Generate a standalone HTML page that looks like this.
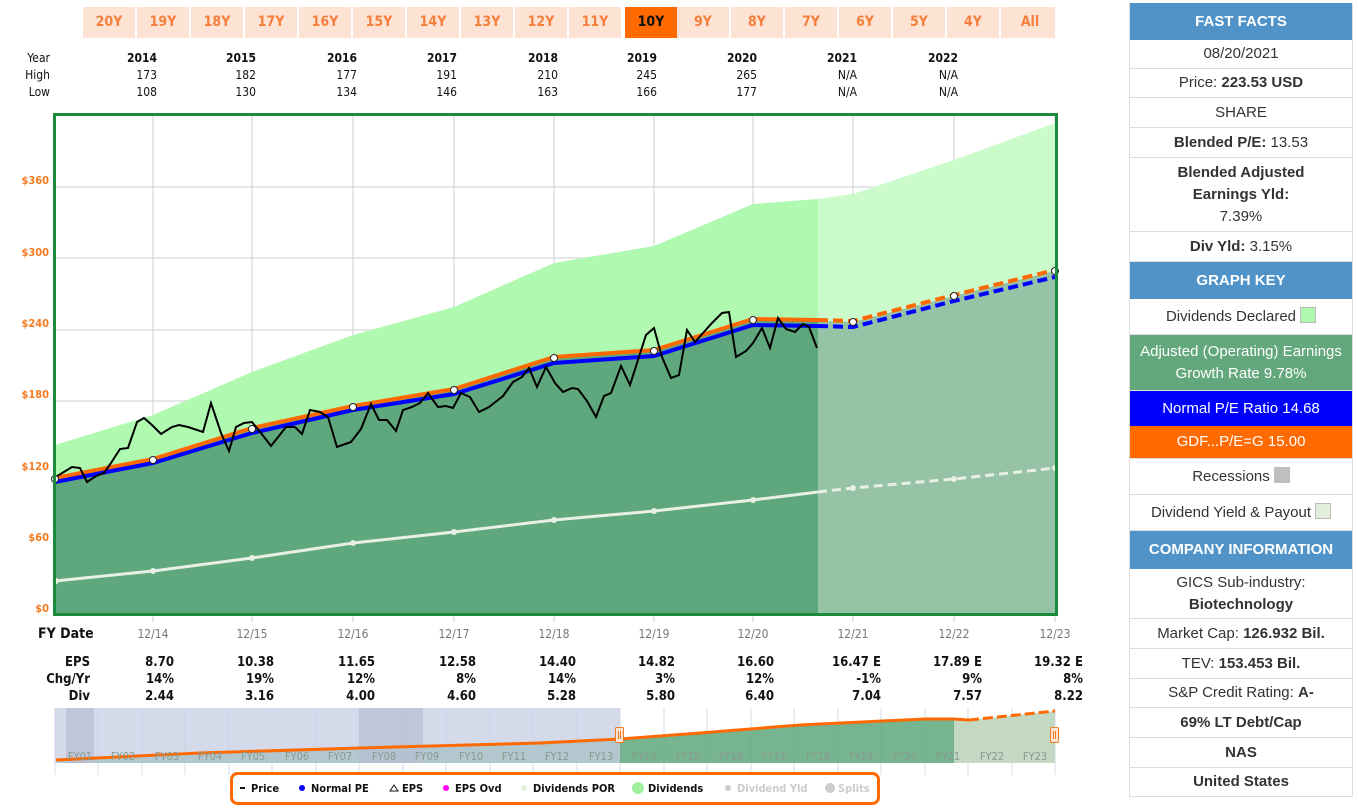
<!DOCTYPE html>
<html><head><meta charset="utf-8"><style>
*{margin:0;padding:0;box-sizing:border-box}
body{width:1358px;height:809px;background:#fff;font-family:"Liberation Sans",sans-serif;position:relative;overflow:hidden}
.tab{position:absolute;top:7px;height:31px;width:52px;background:#fde3d4;color:#f47f3c;font-size:14px;font-weight:bold;text-align:center;line-height:31px;font-family:"DejaVu Sans Condensed","Liberation Sans Narrow","Liberation Sans",sans-serif}
.tab.on{background:#ff6a00;color:#111}
.t{position:absolute;font-size:12px;color:#111;font-family:"DejaVu Sans Condensed","Liberation Sans",sans-serif}
.r{text-align:right}
.b{font-weight:bold}
#rp{position:absolute;left:1129px;top:3px;width:224px;border-left:1px solid #ddd;border-right:1px solid #ddd}
#rp div{border-bottom:1px solid #ddd;text-align:center;font-size:15px;color:#333;display:flex;align-items:center;justify-content:center;flex-direction:column;line-height:22px}
#rp .h{background:#4f93c9;color:#fff;font-weight:bold;font-size:15px;border-bottom:none}
.sw{display:inline-block;width:16px;height:16px;vertical-align:-2px;margin-left:4px;border:1px solid #bbb}
</style></head><body>

<div class="tab" style="left:83px">20Y</div><div class="tab" style="left:137px">19Y</div><div class="tab" style="left:191px">18Y</div><div class="tab" style="left:245px">17Y</div><div class="tab" style="left:299px">16Y</div><div class="tab" style="left:353px">15Y</div><div class="tab" style="left:407px">14Y</div><div class="tab" style="left:461px">13Y</div><div class="tab" style="left:515px">12Y</div><div class="tab" style="left:569px">11Y</div><div class="tab on" style="left:625px">10Y</div><div class="tab" style="left:677px">9Y</div><div class="tab" style="left:731px">8Y</div><div class="tab" style="left:785px">7Y</div><div class="tab" style="left:839px">6Y</div><div class="tab" style="left:893px">5Y</div><div class="tab" style="left:947px">4Y</div><div class="tab" style="left:1001px">3Y</div><div class="tab" style="left:1005px;width:50px">All</div>

<div class="t r" style="left:0;width:50px;top:50px;line-height:17px">Year<br>High<br>Low</div>
<div class="t r" style="left:97px;width:60px;top:50px;line-height:17px"><b>2014</b><br>173<br>108</div>
<div class="t r" style="left:196px;width:60px;top:50px;line-height:17px"><b>2015</b><br>182<br>130</div>
<div class="t r" style="left:297px;width:60px;top:50px;line-height:17px"><b>2016</b><br>177<br>134</div>
<div class="t r" style="left:397px;width:60px;top:50px;line-height:17px"><b>2017</b><br>191<br>146</div>
<div class="t r" style="left:498px;width:60px;top:50px;line-height:17px"><b>2018</b><br>210<br>163</div>
<div class="t r" style="left:597px;width:60px;top:50px;line-height:17px"><b>2019</b><br>245<br>166</div>
<div class="t r" style="left:697px;width:60px;top:50px;line-height:17px"><b>2020</b><br>265<br>177</div>
<div class="t r" style="left:797px;width:60px;top:50px;line-height:17px"><b>2021</b><br>N/A<br>N/A</div>
<div class="t r" style="left:898px;width:60px;top:50px;line-height:17px"><b>2022</b><br>N/A<br>N/A</div>

<svg width="1120" height="809" style="position:absolute;left:0;top:0" font-family="DejaVu Sans Condensed,Liberation Sans,sans-serif">
<g stroke="#e6e6e6" stroke-width="2"><line x1="55" x2="1057" y1="187" y2="187"/><line x1="55" x2="1057" y1="258" y2="258"/><line x1="55" x2="1057" y1="330" y2="330"/><line x1="55" x2="1057" y1="401" y2="401"/><line x1="55" x2="1057" y1="472" y2="472"/><line x1="55" x2="1057" y1="543" y2="543"/></g>
<g stroke="#cfcfcf" stroke-width="1"><line x1="153" x2="153" y1="116" y2="622"/><line x1="252" x2="252" y1="116" y2="622"/><line x1="353" x2="353" y1="116" y2="622"/><line x1="454" x2="454" y1="116" y2="622"/><line x1="554" x2="554" y1="116" y2="622"/><line x1="654" x2="654" y1="116" y2="622"/><line x1="753" x2="753" y1="116" y2="622"/><line x1="853" x2="853" y1="116" y2="622"/><line x1="954" x2="954" y1="116" y2="622"/><line x1="1055" x2="1055" y1="116" y2="622"/></g>
<g font-size="11" font-weight="bold" fill="#f47a20" text-anchor="end"><text x="49" y="184">$360</text><text x="49" y="256">$300</text><text x="49" y="327">$240</text><text x="49" y="398">$180</text><text x="49" y="470">$120</text><text x="49" y="541">$60</text><text x="49" y="612">$0</text></g>
<polygon points="55,445 153,415 252,372 353,335 454,307 554,263 654,246 753,204 818,199 818,614 55,614" fill="#b0f9b0"/>
<polygon points="818,199 853,194 954,160 1055,123 1055,614 818,614" fill="#cbfbcb"/>
<polygon points="55,479 153,460 252,430 353,407 454,391 554,358 654,351 753,320 818,321 818,614 55,614" fill="#5fa77c"/>
<polygon points="818,321 853,322 954,296 1055,271 1055,614 818,614" fill="#96c2a6"/>
<polyline points="55,581 153,571 252,558 353,543 454,532 554,520 654,511 753,500 818,492" fill="none" stroke="#e8efe4" stroke-width="3"/>
<polyline points="818,492 853,488 954,479 1055,468" fill="none" stroke="#e8efe4" stroke-width="3" stroke-dasharray="9,5"/>
<g fill="#e8efe4"><circle cx="55" cy="581" r="3.5"/><circle cx="153" cy="571" r="3"/><circle cx="252" cy="558" r="3"/><circle cx="353" cy="543" r="3"/><circle cx="454" cy="532" r="3"/><circle cx="554" cy="520" r="3"/><circle cx="654" cy="511" r="3"/><circle cx="753" cy="500" r="3"/><circle cx="853" cy="488" r="3"/><circle cx="954" cy="479" r="3"/><circle cx="1055" cy="468" r="3"/></g>
<polyline points="55,478 153,459 252,428 353,406 454,389 554,357 654,350 753,319 818,320" fill="none" stroke="#ff6a00" stroke-width="4"/>
<polyline points="818,320 853,321 954,295 1055,270" fill="none" stroke="#ff6a00" stroke-width="4" stroke-dasharray="10,5"/>
<polyline points="55,482 153,463 252,433 353,410 454,394 554,363 654,356 753,325 818,326" fill="none" stroke="#0000ff" stroke-width="4"/>
<polyline points="818,326 853,327 954,301 1055,277" fill="none" stroke="#0000ff" stroke-width="4" stroke-dasharray="10,5"/>
<polyline fill="none" stroke="#000" stroke-width="2" points="54,478 72,467 80,468 87,482 96,476 104,473 111,463 120,449 128,448 137,422 144,418 152,425 161,434 172,427 179,425 188,427 203,432 211,403 221,433 229,451 236,427 244,423 252,422 261,433 271,446 286,427 295,427 302,434 310,410 320,412 328,417 337,447 351,442 361,429 371,404 379,420 387,420 396,431 403,410 412,407 420,403 428,393 438,407 446,406 453,408 461,393 470,397 479,412 489,407 503,396 513,382 522,377 529,368 537,387 546,367 555,383 563,392 572,388 578,389 587,401 596,417 604,396 611,393 621,366 630,385 637,363 646,335 654,328 662,357 671,378 679,375 687,330 695,342 703,333 712,323 722,313 729,312 736,357 746,351 753,343 762,328 770,348 778,318 786,329 795,332 803,324 809,327 817,348"/>
<g fill="#fff" stroke="#222" stroke-width="1"><circle cx="55" cy="479" r="3.5"/><circle cx="153" cy="460" r="3.5"/><circle cx="252" cy="429" r="3.5"/><circle cx="353" cy="407" r="3.5"/><circle cx="454" cy="390" r="3.5"/><circle cx="554" cy="358" r="3.5"/><circle cx="654" cy="351" r="3.5"/><circle cx="753" cy="320" r="3.5"/><circle cx="853" cy="322" r="3.5"/><circle cx="954" cy="296" r="3.5"/><circle cx="1055" cy="271" r="3.5"/></g>
<rect x="54.5" y="114.5" width="1002" height="500" fill="none" stroke="#1b8a3c" stroke-width="3"/>
<text x="38" y="638" font-size="14" font-weight="bold" fill="#111">FY Date</text>
<g font-size="12" fill="#777" text-anchor="middle"><text x="153" y="638">12/14</text><text x="252" y="638">12/15</text><text x="353" y="638">12/16</text><text x="454" y="638">12/17</text><text x="554" y="638">12/18</text><text x="654" y="638">12/19</text><text x="753" y="638">12/20</text><text x="853" y="638">12/21</text><text x="954" y="638">12/22</text><text x="1055" y="638">12/23</text></g>
<g font-size="13" font-weight="bold" fill="#111" text-anchor="end">
<text x="90" y="666">EPS</text><text x="90" y="683">Chg/Yr</text><text x="90" y="700">Div</text>
<text x="174" y="666">8.70</text><text x="174" y="683">14%</text><text x="174" y="700">2.44</text>
<text x="274" y="666">10.38</text><text x="274" y="683">19%</text><text x="274" y="700">3.16</text>
<text x="375" y="666">11.65</text><text x="375" y="683">12%</text><text x="375" y="700">4.00</text>
<text x="476" y="666">12.58</text><text x="476" y="683">8%</text><text x="476" y="700">4.60</text>
<text x="576" y="666">14.40</text><text x="576" y="683">14%</text><text x="576" y="700">5.28</text>
<text x="675" y="666">14.82</text><text x="675" y="683">3%</text><text x="675" y="700">5.80</text>
<text x="774" y="666">16.60</text><text x="774" y="683">12%</text><text x="774" y="700">6.40</text>
<text x="881" y="666">16.47 E</text><text x="881" y="683">-1%</text><text x="881" y="700">7.04</text>
<text x="982" y="666">17.89 E</text><text x="982" y="683">9%</text><text x="982" y="700">7.57</text>
<text x="1083" y="666">19.32 E</text><text x="1083" y="683">8%</text><text x="1083" y="700">8.22</text></g>
<g stroke="#d5dbe8" stroke-width="1"><line x1="55" x2="55" y1="708" y2="775"/><line x1="98" x2="98" y1="708" y2="775"/><line x1="142" x2="142" y1="708" y2="775"/><line x1="185" x2="185" y1="708" y2="775"/><line x1="229" x2="229" y1="708" y2="775"/><line x1="272" x2="272" y1="708" y2="775"/><line x1="316" x2="316" y1="708" y2="775"/><line x1="359" x2="359" y1="708" y2="775"/><line x1="403" x2="403" y1="708" y2="775"/><line x1="446" x2="446" y1="708" y2="775"/><line x1="490" x2="490" y1="708" y2="775"/><line x1="533" x2="533" y1="708" y2="775"/><line x1="577" x2="577" y1="708" y2="775"/><line x1="620" x2="620" y1="708" y2="775"/><line x1="664" x2="664" y1="708" y2="775"/><line x1="707" x2="707" y1="708" y2="775"/><line x1="751" x2="751" y1="708" y2="775"/><line x1="794" x2="794" y1="708" y2="775"/><line x1="838" x2="838" y1="708" y2="775"/><line x1="881" x2="881" y1="708" y2="775"/><line x1="925" x2="925" y1="708" y2="775"/><line x1="968" x2="968" y1="708" y2="775"/><line x1="1012" x2="1012" y1="708" y2="775"/><line x1="1055" x2="1055" y1="708" y2="775"/></g>
<polygon points="56,760 200,753 360,748 540,743 620,739 700,733 800,725 925,719 954,719 954,763 56,763" fill="#5fa77c" opacity="0.85"/>
<polygon points="954,719 969,720 1055,711 1055,763 954,763" fill="#c4d9c4"/>
<rect x="55" y="708" width="565" height="55" fill="#c5cde3" opacity="0.75"/>
<rect x="66" y="708" width="28" height="55" fill="#b7bdd3" opacity="0.7"/>
<rect x="359" y="708" width="64" height="55" fill="#b7bdd3" opacity="0.7"/>
<polyline points="56,760 200,753 360,748 540,743 620,739 700,733 800,725 925,719 954,719 969,720" fill="none" stroke="#ff6a00" stroke-width="3"/>
<polyline points="969,720 1055,711" fill="none" stroke="#ff6a00" stroke-width="3" stroke-dasharray="10,4"/>
<g font-size="11" fill="#8a9a8f" text-anchor="middle"><text x="80" y="760">FY01</text><text x="123" y="760">FY02</text><text x="167" y="760">FY03</text><text x="210" y="760">FY04</text><text x="253" y="760">FY05</text><text x="297" y="760">FY06</text><text x="340" y="760">FY07</text><text x="384" y="760">FY08</text><text x="427" y="760">FY09</text><text x="471" y="760">FY10</text><text x="514" y="760">FY11</text><text x="557" y="760">FY12</text><text x="601" y="760">FY13</text><text x="644" y="760">FY14</text><text x="688" y="760">FY15</text><text x="731" y="760">FY16</text><text x="774" y="760">FY17</text><text x="818" y="760">FY18</text><text x="861" y="760">FY19</text><text x="905" y="760">FY20</text><text x="948" y="760">FY21</text><text x="992" y="760">FY22</text><text x="1035" y="760">FY23</text></g>
<g fill="#fde3d4" stroke="#f47a20"><rect x="615.5" y="727.5" width="8" height="15" rx="1"/><rect x="1050.5" y="727.5" width="8" height="15" rx="1"/></g>
<g stroke="#f47a20"><line x1="618.5" x2="618.5" y1="731" y2="739"/><line x1="620.5" x2="620.5" y1="731" y2="739"/><line x1="1053.5" x2="1053.5" y1="731" y2="739"/><line x1="1055.5" x2="1055.5" y1="731" y2="739"/></g>
<rect x="231.5" y="773.5" width="647" height="30" rx="6" fill="#fff" stroke="#ff6a00" stroke-width="3"/>
<g font-size="11" font-weight="bold" fill="#111">
<rect x="240" y="787" width="5" height="2" fill="#111"/><text x="251" y="792">Price</text>
<circle cx="302" cy="788" r="3" fill="#0000ff"/><text x="311" y="792">Normal PE</text>
<path d="M390 791 L394 785 L398 791 Z" fill="none" stroke="#111"/><text x="402" y="792">EPS</text>
<circle cx="446" cy="788" r="3" fill="#ff00ff"/><text x="455" y="792">EPS Ovd</text>
<circle cx="524" cy="788" r="3" fill="#e2efdd"/><text x="533" y="792">Dividends POR</text>
<circle cx="638" cy="788" r="6" fill="#9ff09f"/><text x="648" y="792">Dividends</text>
<circle cx="728" cy="788" r="3" fill="#ccc"/><text x="737" y="792" fill="#ccc">Dividend Yld</text>
<circle cx="830" cy="788" r="5" fill="#ccc"/><text x="838" y="792" fill="#ccc">Splits</text></g>
</svg>

<div id="rp">
<div class="h" style="height:37px">FAST FACTS</div>
<div style="height:29px">08/20/2021</div>
<div style="height:29px"><span>Price: <b>223.53 USD</b></span></div>
<div style="height:30px">SHARE</div>
<div style="height:30px"><span><b>Blended P/E:</b> 13.53</span></div>
<div style="height:74px"><b>Blended Adjusted<br>Earnings Yld:</b><span>7.39%</span></div>
<div style="height:30px"><span><b>Div Yld:</b> 3.15%</span></div>
<div class="h" style="height:37px">GRAPH KEY</div>
<div style="height:36px"><span>Dividends Declared<span class="sw" style="background:#b0f9b0"></span></span></div>
<div style="height:56px;background:#63a87c;color:#fff">Adjusted (Operating) Earnings<br>Growth Rate 9.78%</div>
<div style="height:35px;background:#0000ff;color:#fff;border:none">Normal P/E Ratio 14.68</div>
<div style="height:33px;background:#ff6a00;color:#fff">GDF...P/E=G 15.00</div>
<div style="height:36px"><span>Recessions<span class="sw" style="background:#bfbfbf;border-color:#bfbfbf"></span></span></div>
<div style="height:36px"><span>Dividend Yield &amp; Payout<span class="sw" style="background:#e2efdd"></span></span></div>
<div class="h" style="height:38px">COMPANY INFORMATION</div>
<div style="height:50px">GICS Sub-industry:<b>Biotechnology</b></div>
<div style="height:30px"><span>Market Cap: <b>126.932 Bil.</b></span></div>
<div style="height:30px"><span>TEV: <b>153.453 Bil.</b></span></div>
<div style="height:29px"><span>S&amp;P Credit Rating: <b>A-</b></span></div>
<div style="height:30px"><b>69% LT Debt/Cap</b></div>
<div style="height:30px"><b>NAS</b></div>
<div style="height:29px"><b>United States</b></div>
</div>
</body></html>
